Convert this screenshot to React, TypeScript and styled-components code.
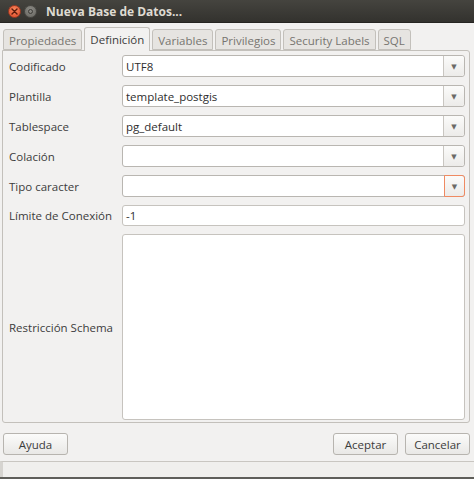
import React from 'react';
import styled, { createGlobalStyle } from 'styled-components';

const GlobalStyle = createGlobalStyle`
  html, body {
    margin: 0;
    padding: 0;
    background: #3a3935;
  }
  * {
    box-sizing: border-box;
  }
`;

const Window = styled.div`
  width: 474px;
  height: 479px;
  display: flex;
  flex-direction: column;
  font-family: 'Open Sans', 'DejaVu Sans', sans-serif;
  font-size: 11.5px;
  color: #3c3c3c;
  background: #f2f1f0;
  border-bottom: 2px solid #5f5e5a;
  overflow: hidden;
`;

const TitleBar = styled.div`
  height: 23px;
  flex: none;
  display: flex;
  align-items: center;
  padding-left: 8px;
  gap: 3px;
  background: linear-gradient(#45443f, #33322e);
  border-bottom: 1px solid #262522;
`;

const WinButton = styled.span<{ $close?: boolean }>`
  width: 13px;
  height: 13px;
  border-radius: 50%;
  display: flex;
  align-items: center;
  justify-content: center;
  background: ${({ $close }) =>
    $close
      ? 'radial-gradient(circle at 50% 35%, #f7875c, #dd4a2a)'
      : 'radial-gradient(circle at 50% 35%, #8c8b86, #66655f)'};
  border: 1px solid ${({ $close }) => ($close ? '#9e3a22' : '#4a4945')};
`;

const MinDot = styled.span`
  width: 5px;
  height: 5px;
  border-radius: 50%;
  border: 1px solid #3d3c38;
`;

const Title = styled.span`
  margin-left: 6px;
  color: #dfdbd2;
  font-weight: 700;
  font-size: 12px;
`;

const Body = styled.div`
  flex: 1;
  display: flex;
  flex-direction: column;
  padding: 4px 4px 0 2px;
`;

const TabBar = styled.div`
  display: flex;
  align-items: flex-end;
  gap: 2px;
  height: 23px;
  padding-left: 1px;
  position: relative;
  z-index: 1;
`;

const Tab = styled.div<{ $active?: boolean }>`
  height: ${({ $active }) => ($active ? '24px' : '21px')};
  margin-bottom: ${({ $active }) => ($active ? '-1px' : '0')};
  padding: 0 5px;
  display: flex;
  align-items: center;
  border: 1px solid #c3c0bb;
  border-bottom: ${({ $active }) => ($active ? 'none' : '1px solid #c3c0bb')};
  border-radius: 3px 3px 0 0;
  background: ${({ $active }) => ($active ? '#f2f1f0' : '#e6e4e1')};
  color: ${({ $active }) => ($active ? '#3c3c3c' : '#777570')};
  white-space: nowrap;
  padding-top: ${({ $active }) => ($active ? '0' : '1px')};
`;

const Panel = styled.div`
  height: 373px;
  flex: none;
  border: 1px solid #c3c0bb;
  border-radius: 0 3px 3px 3px;
  padding: 4px 4px 2px 5px;
  display: flex;
  flex-direction: column;
  gap: 8px;
`;

const Row = styled.div<{ $grow?: boolean }>`
  display: grid;
  grid-template-columns: 114px 1fr;
  align-items: center;
  flex: ${({ $grow }) => ($grow ? '1' : 'none')};
`;

const Label = styled.span`
  padding-left: 1px;
  white-space: nowrap;
`;

const Combo = styled.div`
  height: 22px;
  display: flex;
  background: #fff;
  border: 1px solid #b9b6b1;
  border-radius: 3px;
`;

const ComboText = styled.span`
  flex: 1;
  display: flex;
  align-items: center;
  padding-left: 3px;
  color: #2e2e2e;
`;

const ComboArrow = styled.span<{ $focus?: boolean }>`
  width: 21px;
  margin: ${({ $focus }) => ($focus ? '-1px -1px -1px 0' : '0')};
  display: flex;
  align-items: center;
  justify-content: center;
  border-left: 1px solid ${({ $focus }) => ($focus ? '#ef8a62' : '#c9c6c1')};
  border-top: ${({ $focus }) => ($focus ? '1px solid #ef8a62' : 'none')};
  border-right: ${({ $focus }) => ($focus ? '1px solid #ef8a62' : 'none')};
  border-bottom: ${({ $focus }) => ($focus ? '1px solid #ef8a62' : 'none')};
  border-radius: 0 3px 3px 0;
  background: linear-gradient(#fbfbfa, #ecebe9);
  color: #6b6a66;
  font-size: 7px;
`;

const TextInput = styled.div`
  height: 21px;
  display: flex;
  align-items: center;
  padding-left: 3px;
  background: #fff;
  border: 1px solid #c6c3be;
  border-radius: 3px;
  color: #2e2e2e;
`;

const TextArea = styled.div`
  height: 100%;
  background: #fff;
  border: 1px solid #c6c3be;
  border-radius: 3px;
`;

const ButtonRow = styled.div`
  display: flex;
  align-items: center;
  gap: 7px;
  height: 34px;
  margin-top: 4px;
  padding-left: 1px;
`;

const Button = styled.div`
  width: 65px;
  height: 22px;
  display: flex;
  align-items: center;
  justify-content: center;
  border: 1px solid #b7b4af;
  border-radius: 3px;
  background: linear-gradient(#fbfbfa, #e9e8e6);
  color: #3c3c3c;
`;

const Spacer = styled.div`
  flex: 1;
`;

const StatusBar = styled.div`
  height: 19px;
  margin: 0 -4px 0 -2px;
  border-top: 1px solid #c9c6c1;
  border-left: 3px solid #d6d4d0;
  background: #f0efed;
`;

function ComboBox({ value, focus }: { value?: string; focus?: boolean }) {
  return (
    <Combo>
      <ComboText>{value}</ComboText>
      <ComboArrow $focus={focus}>▼</ComboArrow>
    </Combo>
  );
}

export default function App() {
  const tabs = ['Propiedades', 'Definición', 'Variables', 'Privilegios', 'Security Labels', 'SQL'];
  const combos = [
    { label: 'Codificado', value: 'UTF8' },
    { label: 'Plantilla', value: 'template_postgis' },
    { label: 'Tablespace', value: 'pg_default' },
    { label: 'Colación', value: '' },
    { label: 'Tipo caracter', value: '', focus: true },
  ];
  return (
    <>
      <GlobalStyle />
      <Window>
        <TitleBar>
          <WinButton $close>
            <svg width="7" height="7" viewBox="0 0 7 7">
              <path d="M1 1L6 6M6 1L1 6" stroke="#5a1a0c" strokeWidth="1.4" strokeLinecap="round" />
            </svg>
          </WinButton>
          <WinButton>
            <MinDot />
          </WinButton>
          <Title>Nueva Base de Datos...</Title>
        </TitleBar>
        <Body>
          <TabBar>
            {tabs.map((t) => (
              <Tab key={t} $active={t === 'Definición'}>
                {t}
              </Tab>
            ))}
          </TabBar>
          <Panel>
            {combos.map((c) => (
              <Row key={c.label}>
                <Label>{c.label}</Label>
                <ComboBox value={c.value} focus={c.focus} />
              </Row>
            ))}
            <Row>
              <Label>Límite de Conexión</Label>
              <TextInput>-1</TextInput>
            </Row>
            <Row $grow>
              <Label>Restricción Schema</Label>
              <TextArea />
            </Row>
          </Panel>
          <ButtonRow>
            <Button>Ayuda</Button>
            <Spacer />
            <Button>Aceptar</Button>
            <Button>Cancelar</Button>
          </ButtonRow>
          <StatusBar />
        </Body>
      </Window>
    </>
  );
}
